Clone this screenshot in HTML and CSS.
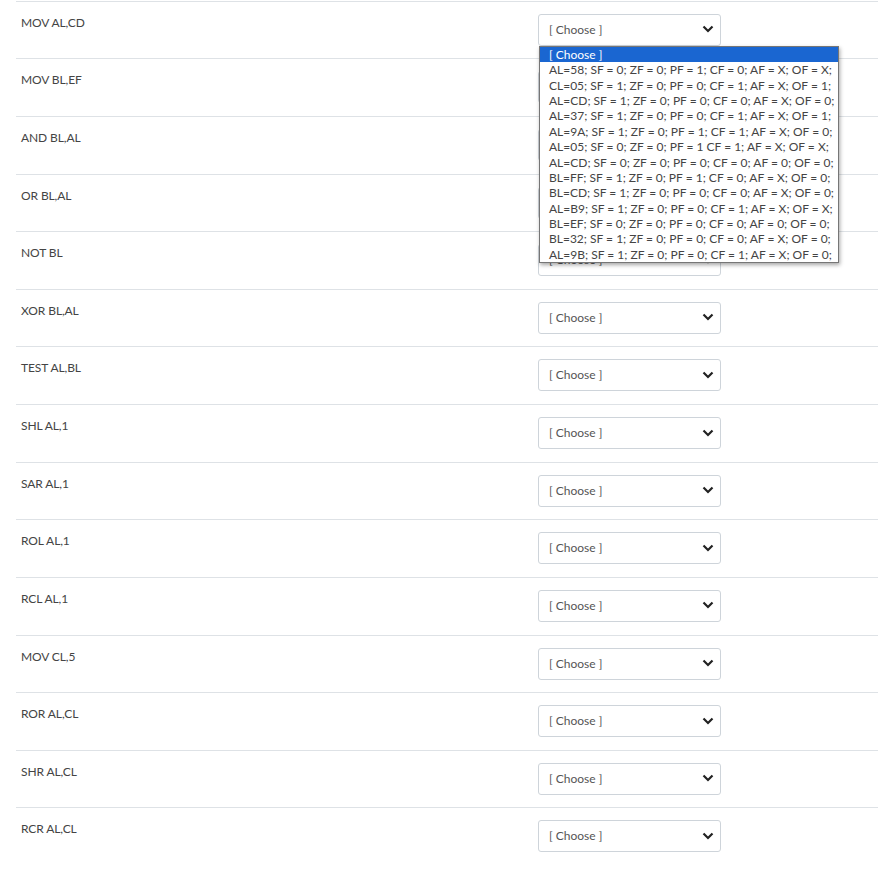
FILE: index.html
```html
<!DOCTYPE html>
<html lang="en">
<head>
    <meta charset="UTF-8">
    <meta name="viewport" content="width=device-width, initial-scale=1.0">
    <title>Match the instructions</title>
    <link rel="stylesheet" href="styles.css">
</head>
<body>
    <div class="answers">
        <div class="row">
            <div class="label">MOV AL,CD</div>
            <div class="control">
                <div class="select open">
                    <span class="value">[ Choose ]</span>
                    <svg class="chevron" width="12" height="8" viewBox="0 0 12 8"><path d="M1.5 1.5 L6 6 L10.5 1.5" fill="none" stroke="#222" stroke-width="2.2"/></svg>
                </div>
                <ul class="options">
                    <li class="selected">[ Choose ]</li>
                    <li>AL=58; SF = 0; ZF = 0; PF = 1; CF = 0; AF = X; OF = X;</li>
                    <li>CL=05; SF = 1; ZF = 0; PF = 0; CF = 1; AF = X; OF = 1;</li>
                    <li>AL=CD; SF = 1; ZF = 0; PF = 0; CF = 0; AF = X; OF = 0;</li>
                    <li>AL=37; SF = 1; ZF = 0; PF = 0; CF = 1; AF = X; OF = 1;</li>
                    <li>AL=9A; SF = 1; ZF = 0; PF = 1; CF = 1; AF = X; OF = 0;</li>
                    <li>AL=05; SF = 0; ZF = 0; PF = 1 CF = 1; AF = X; OF = X;</li>
                    <li>AL=CD; SF = 0; ZF = 0; PF = 0; CF = 0; AF = 0; OF = 0;</li>
                    <li>BL=FF; SF = 1; ZF = 0; PF = 1; CF = 0; AF = X; OF = 0;</li>
                    <li>BL=CD; SF = 1; ZF = 0; PF = 0; CF = 0; AF = X; OF = 0;</li>
                    <li>AL=B9; SF = 1; ZF = 0; PF = 0; CF = 1; AF = X; OF = X;</li>
                    <li>BL=EF; SF = 0; ZF = 0; PF = 0; CF = 0; AF = 0; OF = 0;</li>
                    <li>BL=32; SF = 1; ZF = 0; PF = 0; CF = 0; AF = X; OF = 0;</li>
                    <li>AL=9B; SF = 1; ZF = 0; PF = 0; CF = 1; AF = X; OF = 0;</li>
                </ul>
            </div>
        </div>
        <div id="rows"></div>
    </div>

    <script>
        // Remaining instructions, each with a closed dropdown
        const instructions = [
            'MOV BL,EF', 'AND BL,AL', 'OR BL,AL', 'NOT BL', 'XOR BL,AL',
            'TEST AL,BL', 'SHL AL,1', 'SAR AL,1', 'ROL AL,1', 'RCL AL,1',
            'MOV CL,5', 'ROR AL,CL', 'SHR AL,CL', 'RCR AL,CL'
        ];
        const rows = document.getElementById('rows');
        instructions.forEach(text => {
            const row = document.createElement('div');
            row.className = 'row';
            row.innerHTML = `
                <div class="label">${text}</div>
                <div class="control">
                    <div class="select">
                        <span class="value">[ Choose ]</span>
                        <svg class="chevron" width="12" height="8" viewBox="0 0 12 8"><path d="M1.5 1.5 L6 6 L10.5 1.5" fill="none" stroke="#222" stroke-width="2.2"/></svg>
                    </div>
                </div>
            `;
            rows.appendChild(row);
        });
    </script>
</body>
</html>
```

FILE: styles.css
```css
body {
    font-family: Lato, "Open Sans", Arial, sans-serif;
    font-size: 12px;
    color: #444;
    background-color: #fff;
    margin: 0;
    padding: 0;
}
.answers {
    padding-left: 16px;
    padding-top: 0.8px;
}
.row {
    display: grid;
    grid-template-columns: 522px 1fr;
    height: 57.62px;
    box-sizing: border-box;
    border-top: 1px solid #dee2e6;
}
.label {
    padding: 12px 0 0 5px;
    line-height: 18px;
    letter-spacing: -0.1px;
}
.control {
    position: relative;
    padding-top: 12px;
}
.select {
    width: 183px;
    height: 32px;
    box-sizing: border-box;
    border: 1px solid #ced4da;
    border-radius: 3px;
    display: flex;
    align-items: center;
    justify-content: space-between;
    padding: 0 6px 1px 10px;
    color: #555;
    background: #fff;
}
.chevron {
    display: block;
}
.options {
    position: absolute;
    top: 44px;
    left: 1px;
    width: 300px;
    box-sizing: border-box;
    margin: 0;
    padding: 0;
    list-style: none;
    background: #fff;
    border: 1px solid #767676;
    box-shadow: 1px 2px 4px rgba(0, 0, 0, 0.35);
    font-size: 12px;
    color: #444;
    z-index: 2;
}
.options li {
    height: 15.4px;
    line-height: 15.4px;
    padding-left: 9px;
    white-space: nowrap;
}
.options li.selected {
    background-color: #1a66d1;
    color: #fff;
}
```
